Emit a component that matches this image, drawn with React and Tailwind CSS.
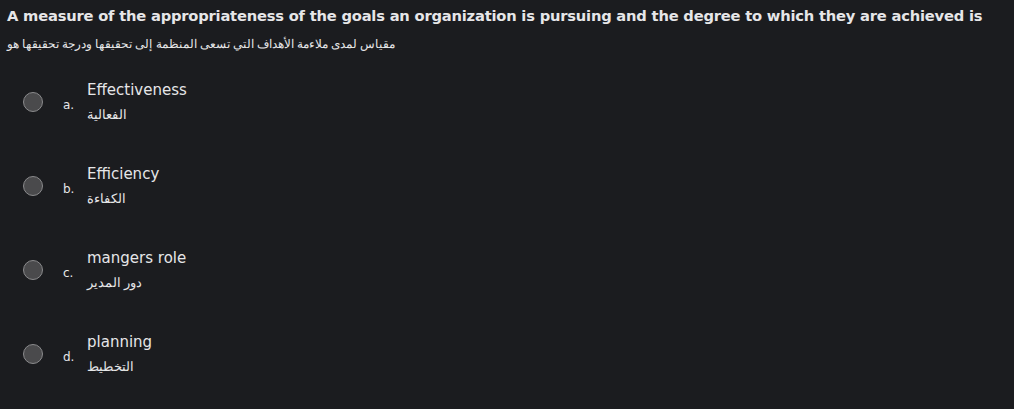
const options = [
  { letter: "a.", en: "Effectiveness", ar: "الفعالية" },
  { letter: "b.", en: "Efficiency", ar: "الكفاءة" },
  { letter: "c.", en: "mangers role", ar: "دور المدير" },
  { letter: "d.", en: "planning", ar: "التخطيط" },
];

function Option({ letter, en, ar }) {
  return (
    <div className="flex h-[84px] items-center">
      <span className="ml-[23px] h-5 w-5 shrink-0 rounded-full border border-[#8a8a8c] bg-[#4a4a4c]" />
      <span className="ml-[20px] mt-[6px] w-[24px] text-[12px] text-[#e6e6e8]">{letter}</span>
      <div className="flex flex-col">
        <span className="text-[15px] leading-[20px] text-[#e6e6e8]">{en}</span>
        <span className="mt-[6px] text-[12.5px] leading-[18px] text-[#e6e6e8] font-['Noto_Sans',sans-serif]">
          {ar}
        </span>
      </div>
    </div>
  );
}

export default function App() {
  return (
    <div className="min-h-[409px] w-full bg-[#1b1c1f] text-[#e6e6e8] font-['DejaVu_Sans',sans-serif]">
      <div className="px-[7px] pt-[6px]">
        <p className="text-[14.7px] font-bold leading-[20px] tracking-[-0.2px]">
          A measure of the appropriateness of the goals an organization is pursuing and the degree to which they are achieved is
        </p>
        <p className="mt-[8px] text-[12px] leading-[20px] font-['Noto_Sans',sans-serif]">
          مقياس لمدى ملاءمة الأهداف التي تسعى المنظمة إلى تحقيقها ودرجة تحقيقها هو
        </p>
      </div>
      <div className="mt-[6px]">
        {options.map((o) => (
          <Option key={o.letter} {...o} />
        ))}
      </div>
    </div>
  );
}
